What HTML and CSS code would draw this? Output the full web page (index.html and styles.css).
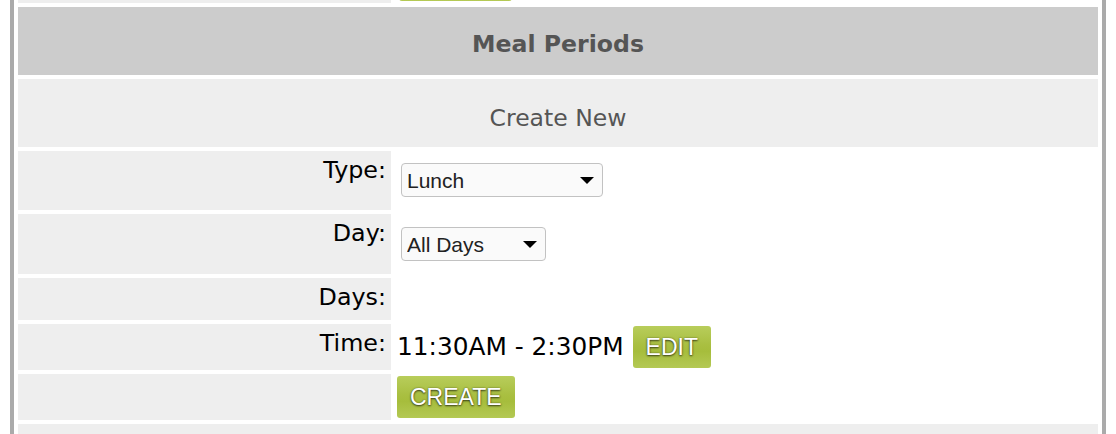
FILE: index.html
```html
<!DOCTYPE html>
<html lang="en">
<head>
<meta charset="utf-8">
<title>Meal Periods</title>
<link rel="stylesheet" href="styles.css">
</head>
<body>
<div class="page">
  <table class="form">
    <colgroup><col class="c-label"><col class="c-value"></colgroup>
    <tbody>
      <tr class="r-btn">
        <td class="label"></td>
        <td class="value"><button class="btn btn-prev" type="button" aria-label="Save"></button></td>
      </tr>
      <tr class="r-head">
        <th class="head" colspan="2">Meal Periods</th>
      </tr>
      <tr class="r-sub">
        <td class="sub" colspan="2">Create New</td>
      </tr>
      <tr class="r-type">
        <td class="label">Type:</td>
        <td class="value">
          <span class="sel">
            <select class="select w-type"><option>Lunch</option><option>Breakfast</option><option>Dinner</option></select>
            <svg class="caret" width="14" height="7" viewBox="0 0 14 7" aria-hidden="true"><path d="M0 0 H14 L7 7 Z" fill="#000"/></svg>
          </span>
        </td>
      </tr>
      <tr class="r-day">
        <td class="label">Day:</td>
        <td class="value">
          <span class="sel">
            <select class="select w-day"><option>All Days</option><option>Weekdays</option><option>Weekends</option></select>
            <svg class="caret" width="14" height="7" viewBox="0 0 14 7" aria-hidden="true"><path d="M0 0 H14 L7 7 Z" fill="#000"/></svg>
          </span>
        </td>
      </tr>
      <tr class="r-days">
        <td class="label">Days:</td>
        <td class="value"></td>
      </tr>
      <tr class="r-time">
        <td class="label">Time:</td>
        <td class="value"><span class="time">11:30AM - 2:30PM</span><button class="btn btn-edit" type="button">EDIT</button></td>
      </tr>
      <tr class="r-create">
        <td class="label"></td>
        <td class="value"><button class="btn" type="button">CREATE</button></td>
      </tr>
      <tr class="r-next">
        <td class="next" colspan="2"></td>
      </tr>
    </tbody>
  </table>
</div>
</body>
</html>
```
FILE: styles.css
```css
html, body {
  margin: 0;
  padding: 0;
  background: #fff;
  overflow: hidden;
}

.page {
  padding-left: 10px;
  font-family: "DejaVu Sans", Verdana, sans-serif;
}

.form {
  box-sizing: border-box;
  width: 1096px;
  margin-top: -51px;
  border: 4px solid #aaa;
  border-collapse: separate;
  border-spacing: 4px;
  table-layout: fixed;
}

.c-label { width: 373px; }

.form td, .form th {
  padding: 0;
}

.label {
  background: #eee;
  text-align: right;
  vertical-align: top;
  padding: 5px 5px 0 0 !important;
  font-size: 23.8px;
  color: #000;
  line-height: 1.18;
}

.value {
  background: #fff;
  vertical-align: top;
  padding: 2px !important;
  font-size: 24.8px;
  color: #000;
}

.r-btn { height: 46px; }
.r-head { height: 68px; }
.r-sub { height: 68px; }
.r-type { height: 59px; }
.r-day { height: 60px; }
.r-days { height: 42px; }
.r-time { height: 46px; }
.r-create { height: 46px; }
.r-next { height: 40px; }

.head {
  background: #ccc;
  color: #555;
  font-weight: bold;
  font-size: 23.6px;
  text-align: center;
  vertical-align: middle;
  padding-top: 6px !important;
}

.sub {
  background: #eee;
  color: #555;
  font-size: 23.5px;
  text-align: center;
  vertical-align: middle;
  padding-top: 9px !important;
}

.next {
  background: #eee;
}

.sel {
  position: relative;
  display: inline-block;
  margin: 10px 0 0 4px;
  vertical-align: top;
}

.select {
  -webkit-appearance: none;
  appearance: none;
  box-sizing: border-box;
  height: 34px;
  margin: 0;
  padding: 0 0 0 5px;
  border: 1px solid #c2c2c2;
  border-radius: 4px;
  background: #fafafa;
  font-family: "Liberation Sans", Arial, sans-serif;
  font-size: 21px;
  color: #222;
  display: block;
}

.w-type { width: 202px; }
.w-day { width: 145px; }

.caret {
  position: absolute;
  right: 9px;
  top: 14px;
  pointer-events: none;
}

.r-day .sel { margin-top: 11px; }

.time {
  font-family: "DejaVu Sans", Verdana, sans-serif;
  font-size: 24.8px;
  line-height: 1.16;
}

.btn {
  display: inline-block;
  box-sizing: border-box;
  height: 42px;
  padding: 0 13px;
  margin: 0;
  border: 0;
  border-radius: 3px;
  background: linear-gradient(#b8cd5b 0%, #a9bf41 45%, #a6bd3c 60%, #b4c954 100%);
  color: #fff;
  font-family: "Liberation Sans", Arial, sans-serif;
  font-size: 23px;
  line-height: 42px;
  text-shadow: 0 1px 2px rgba(0, 0, 0, 0.65), 0 0 2px rgba(0, 0, 0, 0.4);
  vertical-align: baseline;
  cursor: pointer;
}

.btn-edit { margin-left: 9px; }
.btn-prev {
  margin-left: 2px;
  width: 113px;
  vertical-align: top;
}
```
